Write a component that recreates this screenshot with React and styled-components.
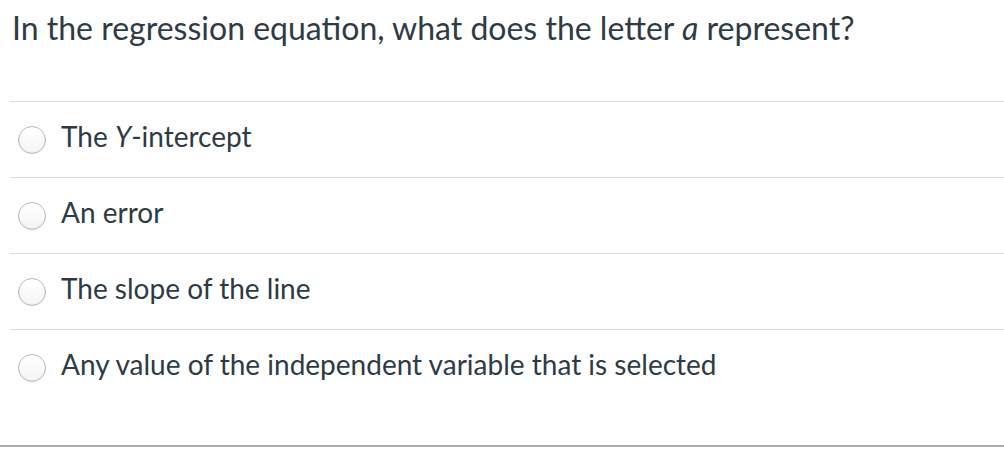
import styled, { createGlobalStyle } from "styled-components";

const Global = createGlobalStyle`
  body {
    margin: 0;
    background: #fff;
    font-family: Lato, "Open Sans", sans-serif;
    color: #2d3b45;
  }
`;

const Question = styled.div`
  width: 1004px;
  height: 458px;
  display: flex;
  flex-direction: column;
`;

const Title = styled.div`
  font-size: 32px;
  line-height: 38px;
  padding: 9px 0 0 12px;
  height: 101px;
  box-sizing: border-box;
`;

const Answers = styled.div`
  margin-left: 10px;
  display: flex;
  flex-direction: column;
`;

const Answer = styled.label`
  display: flex;
  align-items: center;
  gap: 15px;
  height: 76px;
  box-sizing: border-box;
  border-top: 1px solid #dcdcdc;
  padding: 0 0 0 8px;
  font-size: 28px;
`;

const Radio = styled.span`
  flex: none;
  width: 26px;
  height: 26px;
  border-radius: 50%;
  border: 1px solid #b8b8b8;
  background: linear-gradient(#fff, #f4f4f4);
  box-shadow: inset 0 -1px 1px rgba(0, 0, 0, 0.06);
`;

const Text = styled.span`
  padding-bottom: 8px;
`;

const Footer = styled.div`
  margin-top: 40px;
  border-top: 2px solid #ababab;
`;

const options = [
  <>The <i>Y</i>-intercept</>,
  "An error",
  "The slope of the line",
  "Any value of the independent variable that is selected",
];

export default function App() {
  return (
    <>
      <Global />
      <Question>
        <Title>
          In the regression equation, what does the letter <i>a</i> represent?
        </Title>
        <Answers>
          {options.map((o, i) => (
            <Answer key={i}>
              <Radio />
              <Text>{o}</Text>
            </Answer>
          ))}
        </Answers>
        <Footer />
      </Question>
    </>
  );
}
